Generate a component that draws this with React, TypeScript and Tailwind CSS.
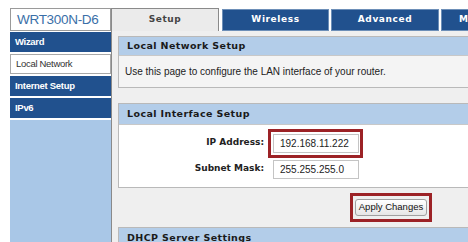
const tabs = [
  { label: "Wireless", w: "w-[107px]" },
  { label: "Advanced", w: "w-[108px]" },
  { label: "Management", w: "w-[108px]" },
];

const side = ["Wizard", "Local Network", "Internet Setup", "IPv6"];

const App = () => {
  return (
    <div className="w-[468px] h-[242px] overflow-hidden bg-white pl-[10px] pt-[8px] font-['DejaVu_Sans',sans-serif]">
      <div className="w-[700px]">
        {/* Top bar */}
        <div className="flex h-[23px]">
          <div className="w-[101px] h-[23px] border border-[#9a9a9a] bg-white flex items-center pl-[6px] text-[13.5px] leading-none text-[#3a6fa8] font-['Liberation_Sans',sans-serif] tracking-[-0.3px]">
            WRT300N-D6
          </div>
          <div className="w-[108px] h-[23px] border border-b-0 border-[#8a8a8a] bg-[#ebebeb] flex items-center justify-center text-[9px] font-bold text-[#444] tracking-[0.6px]">
            Setup
          </div>
          <div className="flex gap-[2px] ml-[3px]">
            {tabs.map((t) => (
              <div
                key={t.label}
                className={`${t.w} h-[22px] mt-[1px] bg-[#21518e] border border-[#6d8fb8] flex items-center justify-center text-[9px] font-bold text-white tracking-[0.6px]`}
              >
                {t.label}
              </div>
            ))}
          </div>
        </div>

        <div className="flex h-[230px]">
          {/* Sidebar */}
          <div className="w-[101px] flex flex-col pt-[1px] gap-[2px] bg-white font-['Liberation_Sans',sans-serif]">
            {side.map((s) =>
              s === "Local Network" ? (
                <div key={s} className="h-[20px] border border-[#a8a8a8] bg-white flex items-center pl-[5px] text-[9.5px] text-[#333] tracking-[-0.3px]">
                  {s}
                </div>
              ) : (
                <div key={s} className="h-[20px] bg-[#21518e] flex items-center pl-[5px] text-[9.5px] font-bold text-white tracking-[-0.3px]">
                  {s}
                </div>
              )
            )}
            <div className="flex-1 bg-[#a9c7e7]" />
          </div>

          {/* Content */}
          <div className="flex-1 bg-[#efefef] border-l border-[#8a8a8a] pl-[6px] pt-[5px]">
            <div className="border border-[#b9b9b9]">
              <div className="h-[18px] bg-[#b3cde9] flex items-center pl-[8px] text-[9.5px] font-bold text-[#1a1a1a] tracking-[0.4px]">
                Local Network Setup
              </div>
              <div className="h-[32px] bg-[#f4f4f4] border-t border-[#c8c8c8] flex items-center pl-[6px] text-[10px] text-[#222] font-['Liberation_Sans',sans-serif]">
                Use this page to configure the LAN interface of your router.
              </div>
            </div>

            <div className="mt-[15px] border border-[#b9b9b9]">
              <div className="h-[20px] bg-[#b3cde9] flex items-center pl-[8px] text-[9.5px] font-bold text-[#1a1a1a] tracking-[0.4px]">
                Local Interface Setup
              </div>
              <div className="h-[63px] bg-white border-t border-[#c8c8c8] flex flex-col pt-[2px]">
                <div className="flex items-center h-[32px]">
                  <div className="w-[145px] text-right text-[9px] font-bold text-[#222]">IP Address:</div>
                  <div className="ml-[4px] border-[3px] border-[#9c2226] p-[2px] pr-[1px]">
                    <div className="w-[86px] h-[19px] border border-[#c4c4c4] bg-white flex items-center pl-[6px] text-[10px] text-[#222] font-['Liberation_Sans',sans-serif]">
                      192.168.11.222
                    </div>
                  </div>
                </div>
                <div className="flex items-center h-[20px]">
                  <div className="w-[145px] text-right text-[9px] font-bold text-[#222]">Subnet Mask:</div>
                  <div className="ml-[9px] w-[86px] h-[19px] border border-[#c4c4c4] bg-white flex items-center pl-[6px] text-[10px] text-[#222] font-['Liberation_Sans',sans-serif]">
                    255.255.255.0
                  </div>
                </div>
              </div>
            </div>

            <div className="h-[39px] flex items-center pl-[232px]">
              <div className="border-[3px] border-[#9c2226] px-[2px] py-[3px]">
                <div className="w-[72px] h-[17px] rounded-[3px] border border-[#a0a0a0] bg-gradient-to-b from-white to-[#e6e6e6] flex items-center justify-center text-[9.5px] text-[#111] font-['Liberation_Sans',sans-serif]">
                  Apply Changes
                </div>
              </div>
            </div>

            <div className="border border-[#b9b9b9]">
              <div className="h-[20px] bg-[#b3cde9] flex items-center pl-[8px] text-[9.5px] font-bold text-[#1a1a1a] tracking-[0.4px]">
                DHCP Server Settings
              </div>
            </div>
          </div>
        </div>
      </div>
    </div>
  );
};

export default App;
